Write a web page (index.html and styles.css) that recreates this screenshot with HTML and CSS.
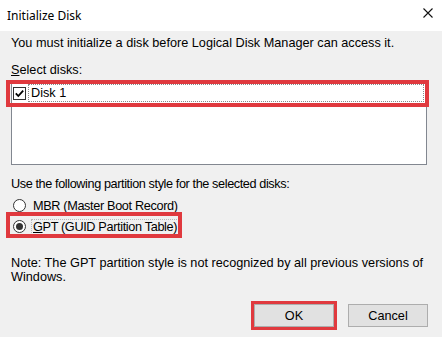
FILE: index.html
```html
<!DOCTYPE html>
<html lang="en">
<head>
    <meta charset="UTF-8">
    <title>Initialize Disk</title>
    <link rel="stylesheet" href="styles.css">
</head>
<body>
    <div class="dialog">
        <!-- Title bar -->
        <div class="titlebar">
            <span class="title">Initialize Disk</span>
            <svg class="close" width="10" height="10" viewBox="0 0 10 10">
                <path d="M0.5 0.5 L9.5 9.5 M9.5 0.5 L0.5 9.5" stroke="#111" stroke-width="1.1" fill="none"/>
            </svg>
        </div>

        <div class="content">
            <p class="intro">You must initialize a disk before Logical Disk Manager can access it.</p>

            <p class="caption"><u>S</u>elect disks:</p>
            <div class="listbox">
                <div class="disk-row highlight row-mark">
                    <span class="checkbox">
                        <svg width="13" height="13" viewBox="0 0 13 13">
                            <rect x="0.5" y="0.5" width="12" height="12" fill="#fff" stroke="#333"/>
                            <path d="M2.8 6.4 L5.3 9 L10.2 3.6" stroke="#000" stroke-width="1.8" fill="none"/>
                        </svg>
                    </span>
                    <span class="disk-name">Disk 1</span>
                </div>
            </div>

            <p class="caption style-caption">Use the following partition style for the selected disks:</p>
            <div class="radios">
                <div class="radio">
                    <span class="dot"></span>
                    <span class="radio-text">MBR (Master Boot Record)</span>
                </div>
                <div class="radio checked highlight radio-mark">
                    <span class="dot"></span>
                    <span class="radio-text focused"><u>G</u>PT (GUID Partition Table)</span>
                </div>
            </div>

            <p class="note">Note: The GPT partition style is not recognized by all previous versions of<br>Windows.</p>

            <div class="buttons">
                <button class="btn btn-mark">OK</button>
                <button class="btn">Cancel</button>
            </div>
        </div>
    </div>
</body>
</html>
```

FILE: styles.css
```css
/* Base */
* {
    box-sizing: border-box;
}

body {
    margin: 0;
    background: #f0f0f0;
    font-family: "Liberation Sans", Arial, sans-serif;
    font-size: 12.7px;
    color: #000;
}

.dialog {
    width: 442px;
    height: 337px;
    overflow: hidden;
}

/* Title bar */
.titlebar {
    height: 31px;
    background: #fff;
    display: flex;
    justify-content: space-between;
    align-items: center;
    padding: 0 9px 0 7px;
}

.title {
    font-family: "Noto Sans", sans-serif;
    font-size: 12px;
    color: #000;
}

.close {
    align-self: flex-start;
    margin-top: 8px;
}

/* Dialog content */
.content {
    padding: 5px 0 0 11px;
}

p {
    margin: 0;
    line-height: 14px;
    white-space: nowrap;
}

.caption {
    margin-top: 13px;
}

.style-caption {
    margin-top: 12px;
    letter-spacing: -0.4px;
}

u {
    text-decoration-thickness: 1px;
    text-underline-offset: 1px;
}

/* Disk list */
.listbox {
    width: 416px;
    height: 82px;
    margin-top: 6px;
    background: #fff;
    border: 1px solid #828790;
}

.disk-row {
    display: flex;
    align-items: center;
    height: 18px;
}

.checkbox {
    display: flex;
    margin: 0 2px 0 1px;
}

.disk-name {
    flex: 1;
    height: 18px;
    margin-right: 2px;
    padding: 1px 2px 0;
    line-height: 14px;
    border: 1px dotted #888;
}

/* Red highlight boxes drawn over the controls */
.highlight {
    position: relative;
}

.highlight::after {
    content: "";
    position: absolute;
    border: 4px solid #e0393e;
}

.row-mark::after {
    left: -6px;
    right: -3px;
    top: -4px;
    bottom: -5px;
}

.radio-mark::after {
    left: -5px;
    right: -4px;
    top: -4px;
    bottom: -1px;
}

/* Radio buttons */
.radios {
    margin-top: 4px;
    display: flex;
    flex-direction: column;
    align-items: flex-start;
}

.radio {
    display: flex;
    align-items: center;
    height: 21px;
    padding-left: 2px;
}

.dot {
    width: 13px;
    height: 13px;
    border: 1px solid #333;
    border-radius: 50%;
    background: #fff;
    margin-right: 6px;
    position: relative;
}

.checked .dot::before {
    content: "";
    position: absolute;
    left: 2px;
    top: 2px;
    width: 7px;
    height: 7px;
    border-radius: 50%;
    background: #333;
}

.radio-text {
    padding: 0 1px;
    line-height: 14px;
    letter-spacing: -0.35px;
}

.focused {
    outline: 1px dotted #b8b8b8;
}

/* Note */
.note {
    margin-top: 19px;
}

/* Buttons */
.buttons {
    display: flex;
    justify-content: flex-end;
    gap: 14px;
    margin-top: 20px;
    padding-right: 14px;
}

.btn {
    width: 80px;
    height: 23px;
    background: #e1e1e1;
    border: 1px solid #adadad;
    font-family: "Liberation Sans", Arial, sans-serif;
    font-size: 12.7px;
    color: #000;
    padding: 0;
}

.btn-mark {
    outline: 3px solid #e0393e;
}
```
